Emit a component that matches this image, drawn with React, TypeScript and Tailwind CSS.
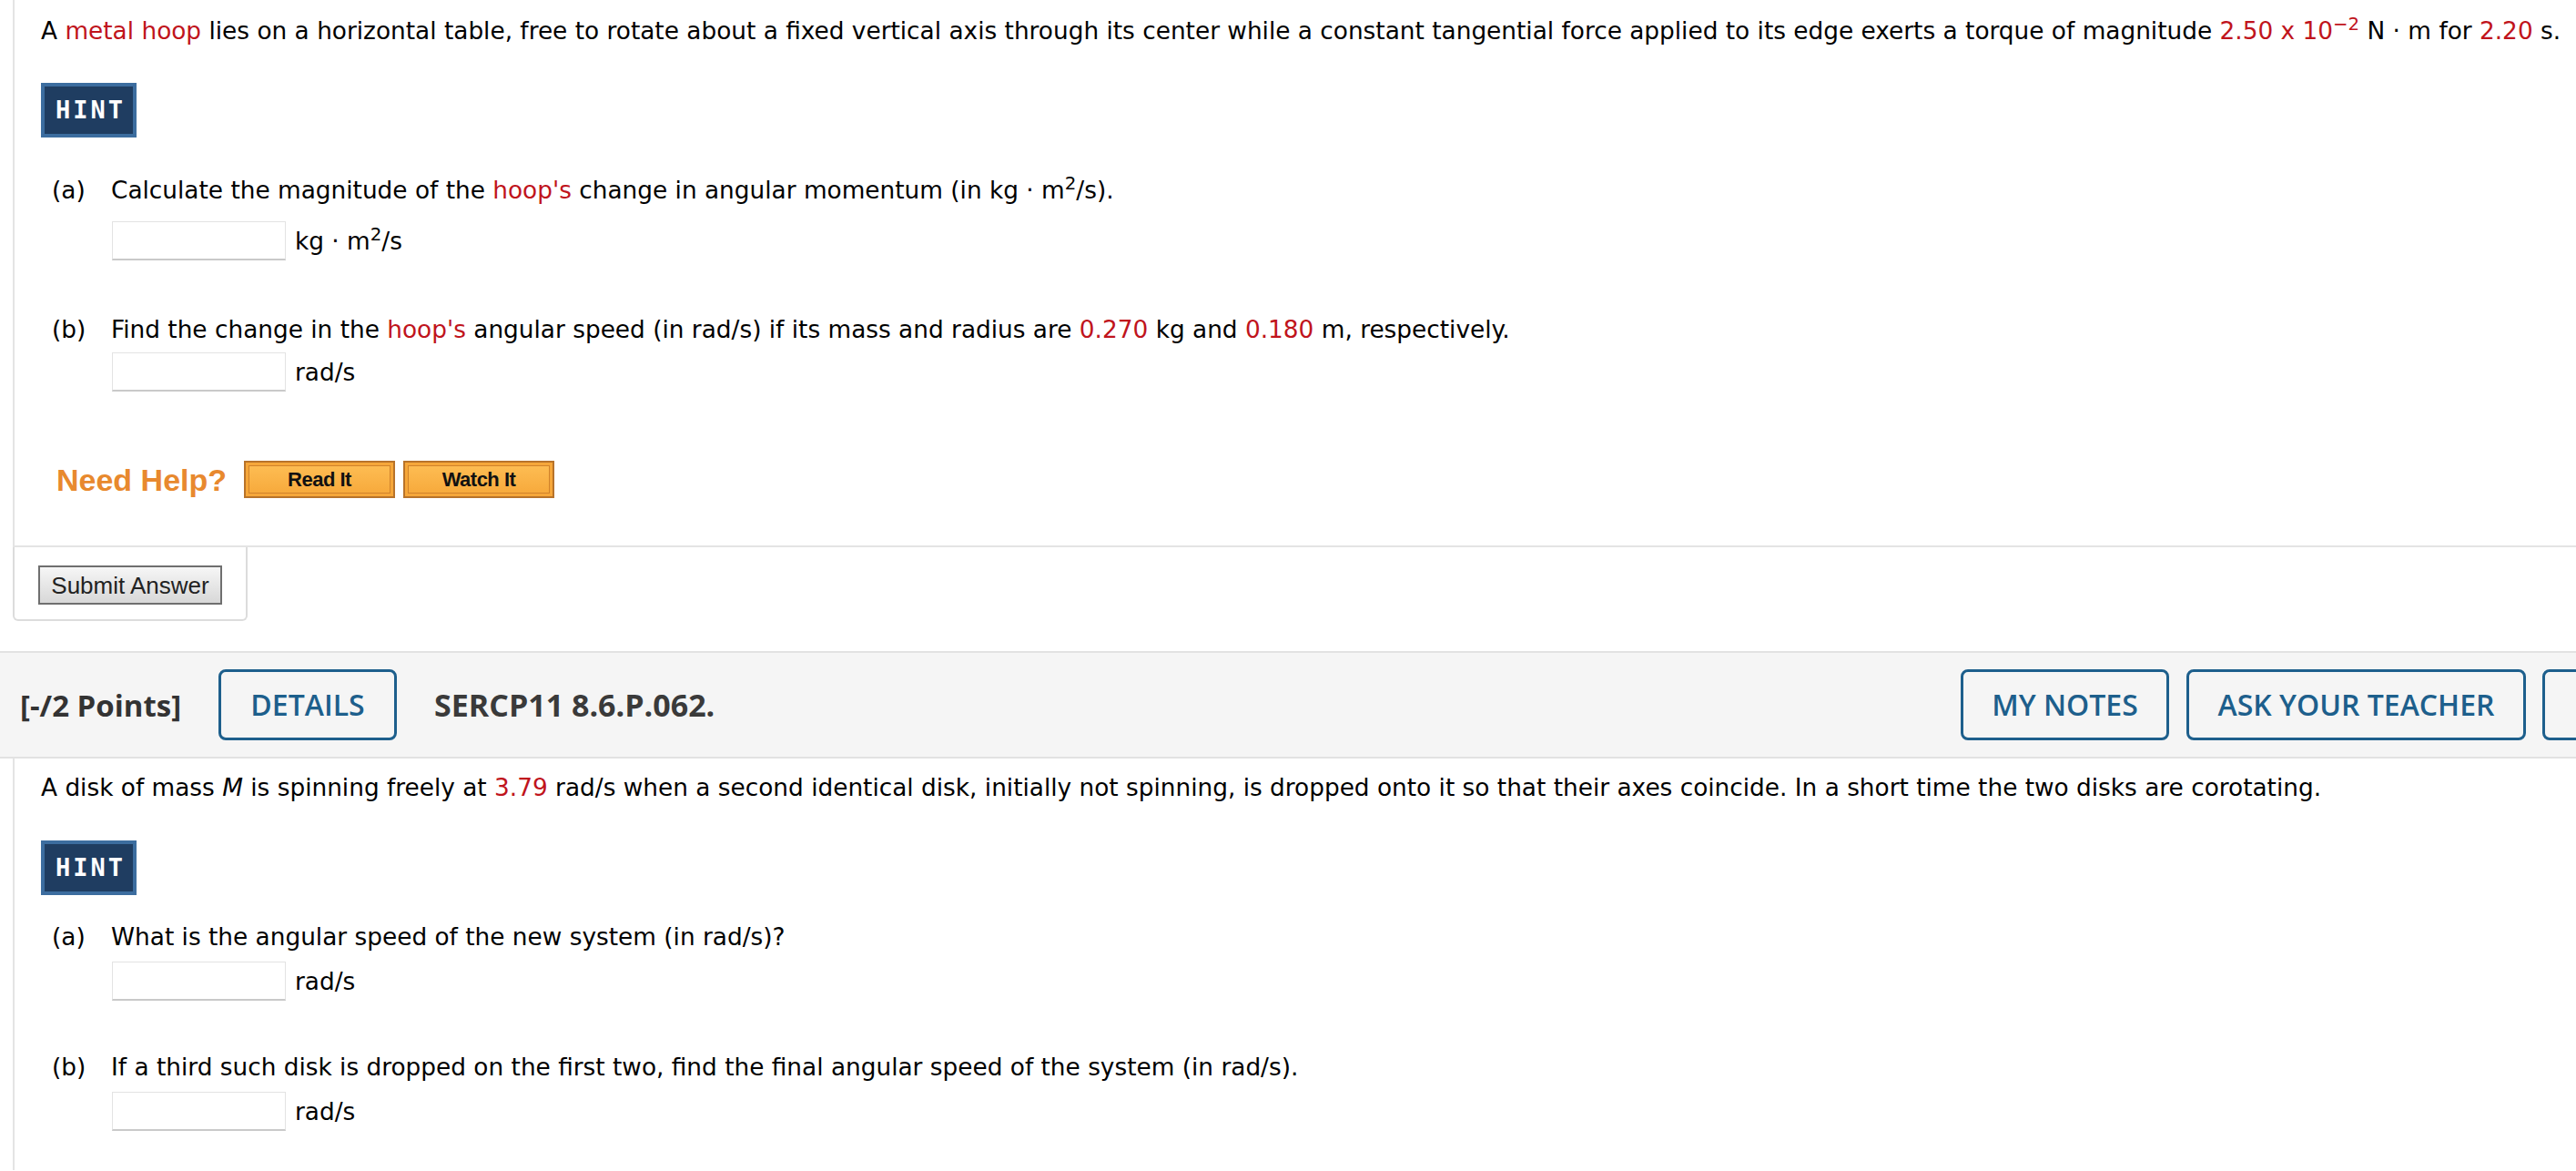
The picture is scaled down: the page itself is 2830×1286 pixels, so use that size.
import React from 'react';

type PartProps = {
  label: string;
  className?: string;
  children: React.ReactNode;
};

const Red = ({ children }: { children: React.ReactNode }) => (
  <span className="text-[#c0141c]">{children}</span>
);

function Hint({ className = '' }: { className?: string }) {
  return (
    <div
      className={`flex h-[60px] w-[105px] items-center justify-center border-[4px] border-[#3c6d9f] bg-[#1f3d61] pl-[4px] font-['DejaVu_Sans_Mono',monospace] text-[27px] font-bold tracking-[3px] text-white ${className}`}
    >
      HINT
    </div>
  );
}

function Part({ label, className = '', children }: PartProps) {
  return (
    <div className={`flex ${className}`}>
      <span className="ml-[12px] w-[65px] shrink-0">{label}</span>
      <span className="whitespace-nowrap">{children}</span>
    </div>
  );
}

function Answer({ unit, className = '' }: { unit: React.ReactNode; className?: string }) {
  return (
    <div className={`flex items-center ${className}`}>
      <input
        type="text"
        aria-label="answer"
        className="ml-[78px] h-[43px] w-[191px] border border-b-2 border-[#e3e3e3] border-b-[#c9c9c9] bg-white outline-none"
      />
      <span className="ml-[10px] whitespace-nowrap">{unit}</span>
    </div>
  );
}

function OrangeButton({ children }: { children: React.ReactNode }) {
  return (
    <button className="flex h-[41px] w-[166px] items-stretch border-2 border-[#b8732a] bg-[#f6a73a] p-[3px]">
      <span className="flex flex-1 items-center justify-center border border-[#d0822b] bg-linear-to-b from-[#fdbc52] to-[#f7aa3c] font-['Liberation_Sans',Arial,sans-serif] text-[22px] font-bold tracking-[-0.5px] text-[#111]">
        {children}
      </span>
    </button>
  );
}

function OutlineButton({ className = '', children }: { className?: string; children: React.ReactNode }) {
  return (
    <button
      className={`flex h-[78px] shrink-0 items-center rounded-[8px] border-[3px] border-[#1d5f8c] text-[32px] font-semibold text-[#1d5f8c] ${className}`}
    >
      {children}
    </button>
  );
}

export default function App() {
  return (
    <div className="min-h-screen w-full overflow-hidden bg-white font-['DejaVu_Sans',Verdana,sans-serif] text-[26.35px] leading-[38px] text-black">
      {/* question 1 */}
      <div className="ml-[14px] border-b-2 border-l-2 border-[#e4e4e4] pb-[52px] pl-[29px] pt-[15px]">
        <p className="whitespace-nowrap">
          A <Red>metal hoop</Red> lies on a horizontal table, free to rotate about a fixed vertical axis through its
          center while a constant tangential force applied to its edge exerts a torque of magnitude{' '}
          <Red>
            2.50 x 10<sup>−2</sup>
          </Red>{' '}
          N · m for <Red>2.20</Red> s.
        </p>

        <Hint className="mt-[38px]" />

        <Part label="(a)" className="mt-[39px]">
          Calculate the magnitude of the <Red>hoop's</Red> change in angular momentum (in kg · m<sup>2</sup>/s).
        </Part>
        <Answer
          className="mt-[15px]"
          unit={
            <>
              kg · m<sup>2</sup>/s
            </>
          }
        />

        <Part label="(b)" className="mt-[57px]">
          Find the change in the <Red>hoop's</Red> angular speed (in rad/s) if its mass and radius are{' '}
          <Red>0.270</Red> kg and <Red>0.180</Red> m, respectively.
        </Part>
        <Answer className="mt-[6px]" unit="rad/s" />

        <div className="mt-[76px] flex h-[41px] items-center">
          <span className="ml-[17px] w-[206px] shrink-0 font-['Liberation_Sans',Arial,sans-serif] text-[34px] font-bold text-[#e8892e]">
            Need Help?
          </span>
          <div className="flex gap-[9px]">
            <OrangeButton>Read It</OrangeButton>
            <OrangeButton>Watch It</OrangeButton>
          </div>
        </div>
      </div>

      <div className="ml-[14px] h-[81px] w-[258px] rounded-b-[6px] border-x-2 border-b-2 border-[#dcdcdc] pl-[26px] pt-[20px]">
        <button className="h-[43px] w-[202px] border-2 border-[#6f6f6f] bg-linear-to-b from-[#f6f6f6] to-[#d8d8d8] font-['Liberation_Sans',Arial,sans-serif] text-[26px] leading-none text-[#222]">
          Submit Answer
        </button>
      </div>

      {/* question 2 header */}
      <div className="mt-[33px] flex h-[118px] w-[3185px] items-center border-y-2 border-[#e2e2e2] bg-[#f5f5f5] pl-[22px] pr-[22px] font-['Open_Sans',sans-serif] leading-none">
        <span className="w-[218px] shrink-0 text-[33px] font-bold text-[#333]">[-/2 Points]</span>
        <OutlineButton className="w-[196px] justify-center">DETAILS</OutlineButton>
        <span className="ml-[41px] text-[34px] font-bold text-[#3a3a3a]">SERCP11 8.6.P.062.</span>
        <div className="ml-auto flex">
          <OutlineButton className="w-[229px] justify-center">MY NOTES</OutlineButton>
          <OutlineButton className="ml-[19px] w-[373px] justify-center">ASK YOUR TEACHER</OutlineButton>
          <OutlineButton className="ml-[18px] w-[370px] justify-start pl-[60px]">PRACTICE ANOTHER</OutlineButton>
        </div>
      </div>

      {/* question 2 */}
      <div className="ml-[14px] border-l-2 border-[#e4e4e4] pb-[43px] pl-[29px] pt-[13px]">
        <p className="whitespace-nowrap">
          A disk of mass <i>M</i> is spinning freely at <Red>3.79</Red> rad/s when a second identical disk, initially
          not spinning, is dropped onto it so that their axes coincide. In a short time the two disks are corotating.
        </p>

        <Hint className="mt-[39px]" />

        <Part label="(a)" className="mt-[27px]">
          What is the angular speed of the new system (in rad/s)?
        </Part>
        <Answer className="mt-[8px]" unit="rad/s" />

        <Part label="(b)" className="mt-[54px]">
          If a third such disk is dropped on the first two, find the final angular speed of the system (in rad/s).
        </Part>
        <Answer className="mt-[8px]" unit="rad/s" />
      </div>
    </div>
  );
}
